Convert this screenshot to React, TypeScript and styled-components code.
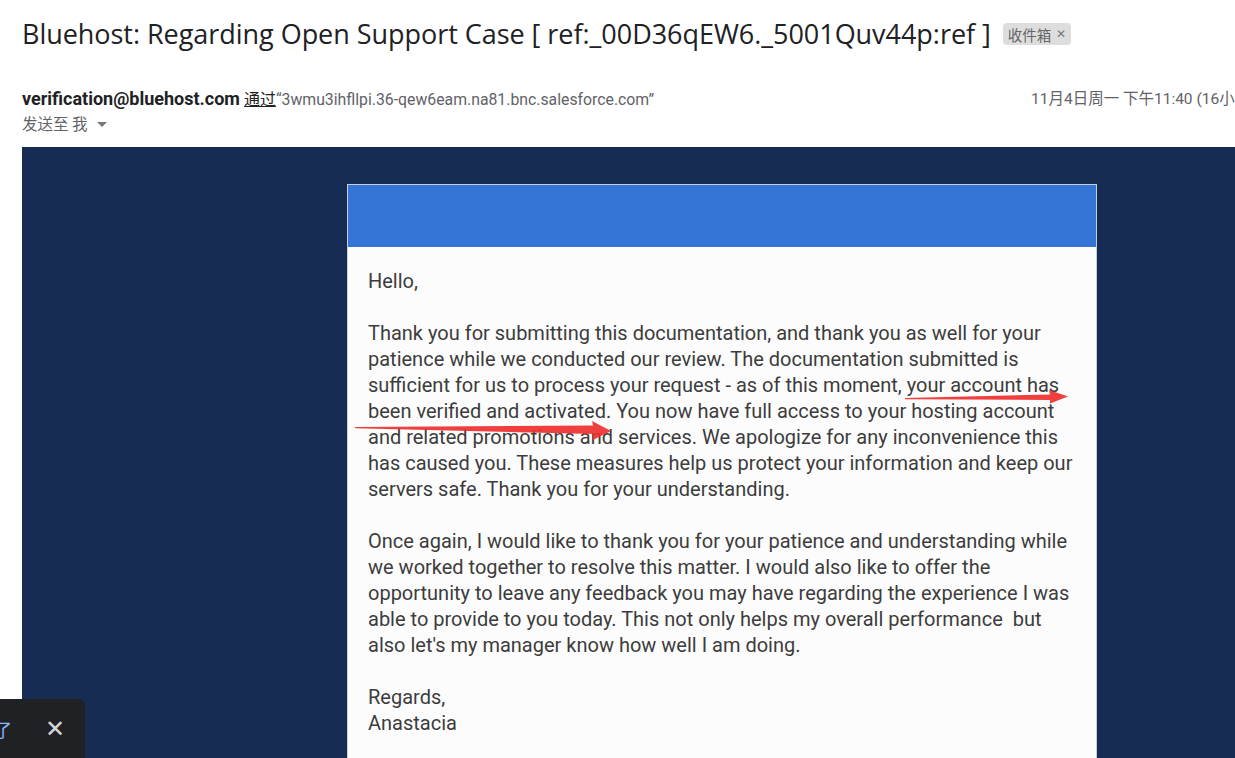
import React from "react";
import styled, { createGlobalStyle } from "styled-components";

const GlobalStyle = createGlobalStyle`
  html, body {
    margin: 0;
    padding: 0;
    background: #ffffff;
    overflow: hidden;
  }
  body {
    font-family: Roboto, "Noto Sans CJK SC", sans-serif;
  }
`;

const Page = styled.div`
  position: relative;
  width: 1235px;
  height: 758px;
  overflow: hidden;
  padding-left: 22px;
  box-sizing: border-box;
`;

const SubjectRow = styled.div`
  display: flex;
  align-items: center;
  gap: 12px;
  padding-top: 15px;
  height: 38px;
`;

const Subject = styled.h1`
  margin: 0;
  font-family: "Open Sans", "Noto Sans CJK SC", sans-serif;
  font-weight: 400;
  font-size: 27px;
  letter-spacing: -0.04px;
  line-height: 38px;
  color: #202124;
  white-space: nowrap;
`;

const Chip = styled.span`
  display: inline-flex;
  align-items: center;
  gap: 5px;
  background: #dddddd;
  color: #666666;
  border-radius: 4px;
  padding: 0 5px;
  height: 22px;
  font-size: 14.5px;
  font-family: Roboto, "Noto Sans CJK SC", sans-serif;
`;

const ChipClose = styled.span`
  font-size: 12px;
  color: #777;
`;

const SenderRow = styled.div`
  display: flex;
  width: 1269px;
  margin-top: 35px;
`;

const SenderInfo = styled.div`
  flex: 1;
  display: flex;
  flex-direction: column;
  gap: 2px;
`;

const FromLine = styled.div`
  display: flex;
  align-items: baseline;
  white-space: nowrap;
  height: 22px;
  line-height: 22px;
`;

const FromName = styled.span`
  font-weight: 700;
  font-size: 18px;
  color: #202124;
  margin-right: 4px;
`;

const Via = styled.span`
  font-size: 16px;
  color: #222;
  text-decoration: underline;
`;

const ViaAddress = styled.span`
  font-size: 15.8px;
  color: #5f6368;
`;

const ToLine = styled.div`
  display: flex;
  align-items: center;
  gap: 6px;
  font-size: 15.5px;
  color: #5f6368;
  font-family: "Noto Sans CJK SC", sans-serif;
  height: 22px;
`;

const Caret = styled.span`
  width: 0;
  height: 0;
  border-left: 5px solid transparent;
  border-right: 5px solid transparent;
  border-top: 5px solid #777;
  margin-left: 4px;
  margin-top: 2px;
`;

const DateText = styled.div`
  width: 260px;
  font-size: 15.5px;
  color: #5f6368;
  white-space: nowrap;
  height: 22px;
  line-height: 22px;
`;

const Canvas = styled.div`
  margin-top: 13px;
  width: 1400px;
  height: 620px;
  background: #162c54;
  padding-top: 37px;
  box-sizing: border-box;
`;

const Card = styled.div`
  width: 750px;
  margin: 0 auto;
  background: #fcfcfc;
  border: 1px solid #c9ced6;
  box-sizing: border-box;
`;

const CardBand = styled.div`
  height: 62px;
  background: #3575d5;
`;

const CardBody = styled.div`
  padding: 21px 20px 40px 20px;
  font-family: Roboto, sans-serif;
  font-size: 20px;
  line-height: 26px;
  color: #3c3c3c;
`;

const Para = styled.p`
  margin: 0 0 26px 0;
  white-space: nowrap;
`;

const Snackbar = styled.div`
  position: absolute;
  left: 0;
  bottom: 0;
  width: 85px;
  height: 59px;
  background: #202124;
  border-top-right-radius: 6px;
  display: flex;
  align-items: center;
`;

const SnackText = styled.span`
  margin-left: -6px;
  color: #8ab4f8;
  font-size: 18px;
  font-family: "Noto Sans CJK SC", sans-serif;
`;

const SnackClose = styled.span`
  margin-left: 33px;
  color: #d6d6d6;
  font-size: 24px;
  font-family: "DejaVu Sans", sans-serif;
  line-height: 1;
`;

const Annotations = styled.svg`
  position: absolute;
  left: 0;
  top: 0;
  pointer-events: none;
`;

export default function App() {
  return (
    <>
      <GlobalStyle />
      <Page>
        <SubjectRow>
          <Subject>Bluehost: Regarding Open Support Case [ ref:_00D36qEW6._5001Quv44p:ref ]</Subject>
          <Chip>
            收件箱<ChipClose>✕</ChipClose>
          </Chip>
        </SubjectRow>
        <SenderRow>
          <SenderInfo>
            <FromLine>
              <FromName>verification@bluehost.com</FromName>
              <Via>通过</Via>
              <ViaAddress>“3wmu3ihfllpi.36-qew6eam.na81.bnc.salesforce.com”</ViaAddress>
            </FromLine>
            <ToLine>
              发送至 我<Caret />
            </ToLine>
          </SenderInfo>
          <DateText>11月4日周一 下午11:40 (16小时前)</DateText>
        </SenderRow>
        <Canvas>
          <Card>
            <CardBand />
            <CardBody>
              <Para>Hello,</Para>
              <Para>
                Thank you for submitting this documentation, and thank you as well for your
                <br />
                patience while we conducted our review. The documentation submitted is
                <br />
                sufficient for us to process your request - as of this moment, your account has
                <br />
                been verified and activated. You now have full access to your hosting account
                <br />
                and related promotions and services. We apologize for any inconvenience this
                <br />
                has caused you. These measures help us protect your information and keep our
                <br />
                servers safe. Thank you for your understanding.
              </Para>
              <Para>
                Once again, I would like to thank you for your patience and understanding while
                <br />
                we worked together to resolve this matter. I would also like to offer the
                <br />
                opportunity to leave any feedback you may have regarding the experience I was
                <br />
                able to provide to you today. This not only helps my overall performance&nbsp; but
                <br />
                also let's my manager know how well I am doing.
              </Para>
              <Para>
                Regards,
                <br />
                Anastacia
              </Para>
            </CardBody>
          </Card>
        </Canvas>
        <Annotations width="1235" height="758" viewBox="0 0 1235 758">
          <polygon
            points="905,398 1050,394.5 1049,390 1068,396.5 1050,403.5 1050,400 905,399.2"
            fill="#ee2f2f"
            opacity="0.92"
          />
          <polygon
            points="355,427 593,425.5 592,421 611,431 593,440 593,434 355,428.2"
            fill="#ee2f2f"
            opacity="0.92"
          />
        </Annotations>
        <Snackbar>
          <SnackText>了</SnackText>
          <SnackClose>✕</SnackClose>
        </Snackbar>
      </Page>
    </>
  );
}
